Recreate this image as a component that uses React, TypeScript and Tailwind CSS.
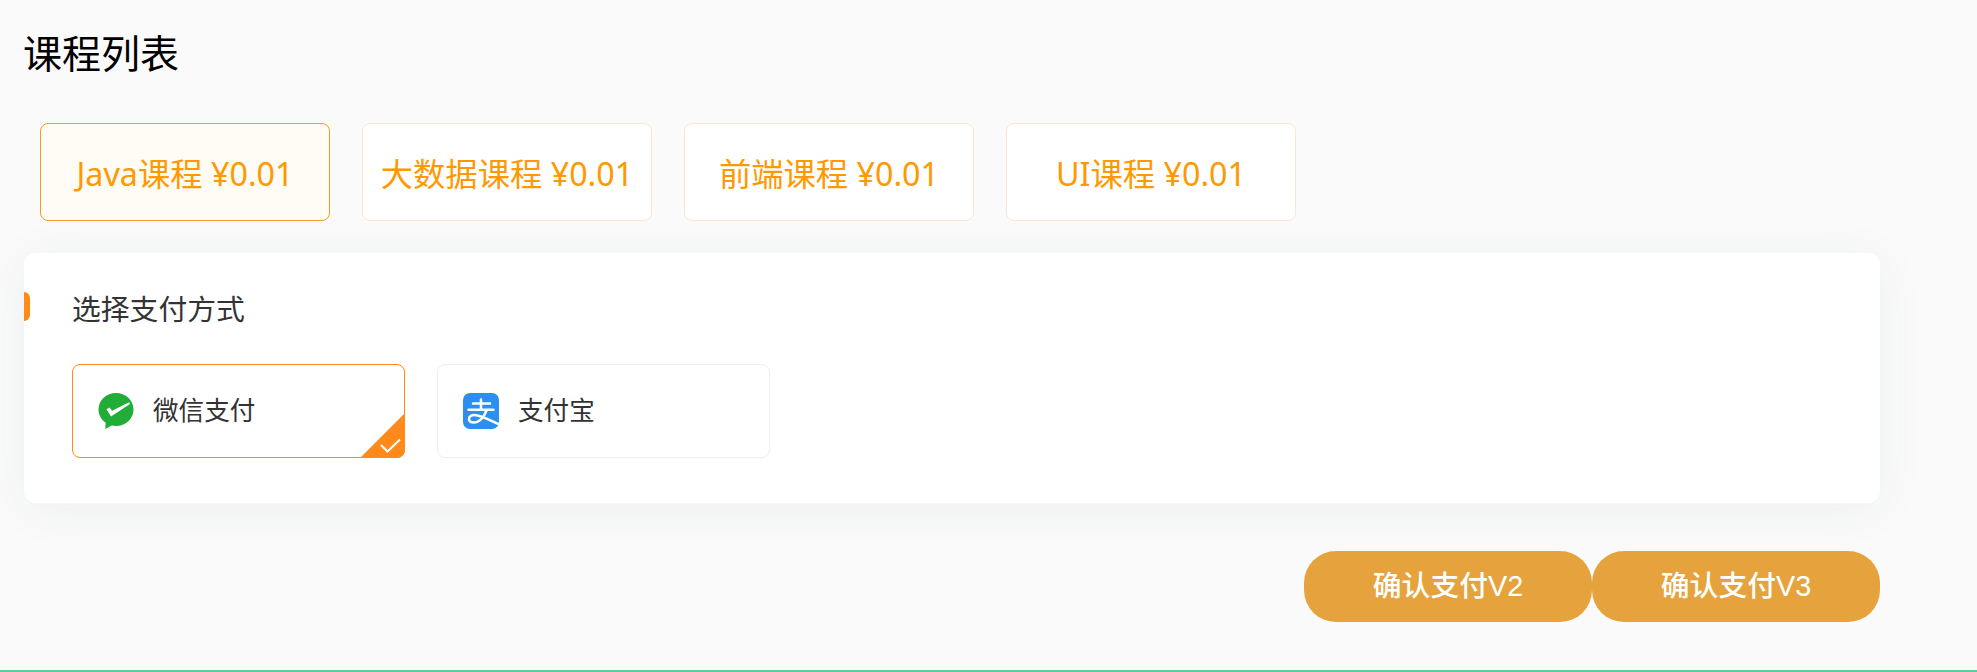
const FONT = "font-['Noto_Sans','Noto_Sans_CJK_SC',sans-serif]"

const courses = [
  { name: 'Java课程', price: '¥0.01', active: true },
  { name: '大数据课程', price: '¥0.01', active: false },
  { name: '前端课程', price: '¥0.01', active: false },
  { name: 'UI课程', price: '¥0.01', active: false },
]

function WechatIcon() {
  return (
    <svg width="36" height="36" viewBox="0 0 36 36" className="shrink-0">
      <path
        d="M18 0C8.300 0 .5 7.400 .5 16.500c0 5.400 2.800 10.200 7.200 13.200L7.300 36l6.400-3.500c1.400.3 2.800.5 4.300.5 9.700 0 17.500-7.400 17.500-16.500S27.700 0 18 0z"
        fill="#22ac38"
      />
      <path d="M8.500 16.200l3-1.700 2.600 3.200L31 9.300l1 1.600L13 23.500z" fill="#fff" />
    </svg>
  )
}

function AlipayIcon() {
  return (
    <svg width="36" height="36" viewBox="0 0 36 36" className="shrink-0">
      <rect width="36" height="36" rx="7" fill="#2b8ff0" />
      <g fill="none" stroke="#fff" strokeWidth="2.500" strokeLinecap="round">
        <path d="M10 10.500h17M18 6.500v10M5.500 16.700h25" />
        <path d="M23.500 17.500c-2.500 7-7.500 12-12.500 12-3.200 0-5-1.500-5-3.500 0-2.500 2.500-4 5.500-4 5 0 12 3.500 24 9" />
      </g>
    </svg>
  )
}

export default function App() {
  return (
    <div className={`h-[672px] overflow-hidden bg-[#fafafa] border-b-2 border-[#66c99b] ${FONT}`}>
      <div className="pl-6 pr-[97px]">
        <h2 className="pt-[27px] -ml-[1px] text-[39px] leading-[52px] font-normal text-black">课程列表</h2>

        {/* course tabs */}
        <div className="flex gap-8 ml-4 mt-[44px]">
          {courses.map((c) => (
            <div
              key={c.name}
              className={`w-[290px] h-[98px] pt-0.5 flex items-center justify-center rounded-lg border text-[32.300px] whitespace-nowrap text-[#f90] ${
                c.active ? 'bg-[#fffcf5] border-[#f39c1f]' : 'bg-white border-[#fbe6d0]'
              }`}
            >
              {c.name} {c.price}
            </div>
          ))}
        </div>

        {/* pay method card */}
        <div className="relative mt-8 h-[250px] rounded-xl bg-white shadow-[0_6px_50px_rgba(30,60,120,0.06)] pl-12 pt-[36px]">
          <span className="absolute left-0 top-[39px] w-1.5 h-[29px] rounded-r-md bg-[#ff8a14]" />
          <p className="text-[28.800px] leading-10 text-[#333]">选择支付方式</p>
          <div className="flex gap-8 mt-[35px]">
            <div className="relative w-[333px] h-[94px] flex items-center pl-[25px] gap-[19px] rounded-lg border border-[#ff8a14] text-[25.600px] text-[#333]">
              <WechatIcon />
              微信支付
              <svg width="45" height="45" viewBox="0 0 45 45" className="absolute -right-px -bottom-px">
                <path d="M0 45L45 0v37a8 8 0 0 1-8 8z" fill="#ff8a1a" />
                <path d="M21 32l6.500 6.500L40 26.500" fill="none" stroke="#fff" strokeWidth="2" />
              </svg>
            </div>
            <div className="w-[333px] h-[94px] flex items-center pl-[25px] gap-[19px] rounded-lg border border-[#ebeef5] text-[25.600px] text-[#333]">
              <AlipayIcon />
              支付宝
            </div>
          </div>
        </div>

        {/* submit buttons */}
        <div className="flex justify-end mt-[48px]">
          {['确认支付V2', '确认支付V3'].map((label) => (
            <button
              key={label}
              className="w-[288px] h-[71px] rounded-[32px] bg-[#e6a33d] text-white text-[28.800px] font-medium font-['Liberation_Sans','Noto_Sans_CJK_SC',sans-serif]"
            >
              {label}
            </button>
          ))}
        </div>
      </div>
    </div>
  )
}
